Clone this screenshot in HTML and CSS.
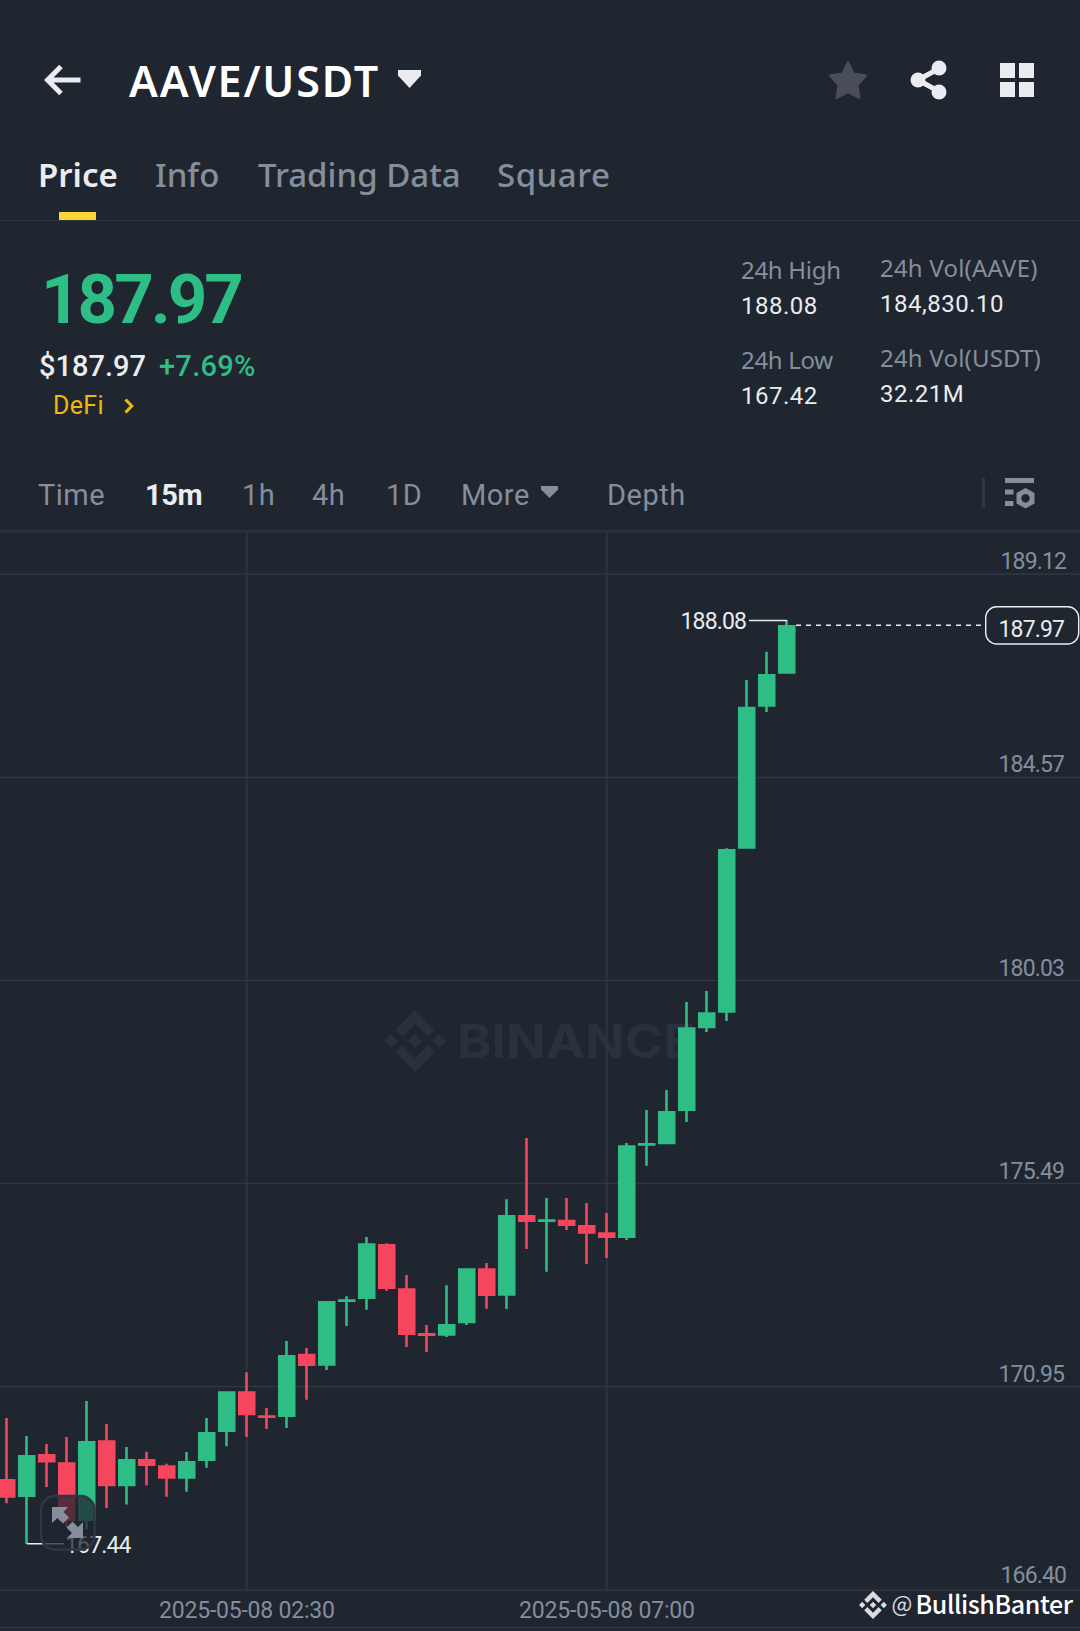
FILE: index.html
```html
<!DOCTYPE html>
<html lang="en">
<head>
  <meta charset="UTF-8">
  <meta name="viewport" content="width=device-width, initial-scale=1.0">
  <title>AAVE/USDT</title>
  <link rel="stylesheet" href="styles.css">
</head>
<body>
  <header class="topbar">
    <svg class="back" width="37" height="32" viewBox="0 0 37 32" fill="none" stroke="#EAECEF" stroke-width="5"><path d="M36.500 16H4M17 2.500L3.500 16L17 29.500"/></svg>
    <h1 class="pair">AAVE/USDT</h1>
    <svg class="pair-caret" width="23" height="18" viewBox="0 0 23 18" fill="#EAECEF"><path d="M0 0H23V5.500L11.500 18L0 5.500Z"/></svg>
    <div class="actions">
      <svg width="38" height="40" viewBox="0 0 38 40" fill="#4A4D5A" stroke="#4A4D5A" stroke-width="2" stroke-linejoin="round"><path d="M19 2L24.500 13.500L37 15.500L28.500 25L30.500 38L19 32L7.500 38L9.500 25L1 15.500L13.500 13.500Z"/></svg>
      <svg width="38" height="40" viewBox="0 0 38 40" fill="#EAECEF"><path d="M29 8.500L8 20L29 31.500" fill="none" stroke="#EAECEF" stroke-width="5"/><circle cx="29" cy="8" r="7.500"/><circle cx="8" cy="20" r="7.500"/><circle cx="29" cy="32" r="7.500"/></svg>
      <svg width="34" height="34" viewBox="0 0 34 34" fill="#EAECEF"><path d="M0 0H15V15H0ZM19 0H34V15H19ZM0 19H15V34H0ZM19 19H34V34H19Z"/></svg>
    </div>
  </header>

  <nav class="tabs">
    <a class="tab active">Price</a>
    <a class="tab">Info</a>
    <a class="tab">Trading Data</a>
    <a class="tab">Square</a>
  </nav>

  <section class="summary">
    <div class="quote">
      <div class="last">187.97</div>
      <div class="sub"><span class="fiat">$187.97</span><span class="change">+7.69%</span></div>
      <div class="tag">DeFi <svg width="10" height="16" viewBox="0 0 10 16" fill="none" stroke="#F0B90B" stroke-width="3"><path d="M1.500 1.500L7.800 8L1.500 14.500"/></svg></div>
    </div>
    <dl class="stats">
      <div><dt>24h High</dt><dd>188.08</dd></div>
      <div><dt>24h Low</dt><dd>167.42</dd></div>
    </dl>
    <dl class="stats volume">
      <div><dt>24h Vol(AAVE)</dt><dd>184,830.10</dd></div>
      <div><dt>24h Vol(USDT)</dt><dd>32.21M</dd></div>
    </dl>
  </section>

  <nav class="intervals">
    <span>Time</span>
    <span class="selected">15m</span>
    <span>1h</span>
    <span>4h</span>
    <span>1D</span>
    <span class="more">More <svg width="17" height="12" viewBox="0 0 17 12" fill="#848E9C"><path d="M0 0H17V3.500L8.500 12L0 3.500Z"/></svg></span>
    <span>Depth</span>
    <i class="divider"></i>
    <svg class="settings" width="30" height="31" viewBox="0 0 30 31" fill="#848E9C"><path d="M0 0H29V5H0ZM0 11.500H8.500V16.500H0ZM0 23H8.500V28H0Z"/><path fill-rule="evenodd" d="M20.500 10L29.500 15V25.500L20.500 30.500L11.500 25.500V15ZM20.500 16A4.200 4.200 0 1 0 20.500 24.400A4.200 4.200 0 1 0 20.500 16Z"/></svg>
  </nav>

  <main class="chart">
    <svg class="plot" width="1080" height="1101" viewBox="0 530 1080 1101">
      <defs>
        <g id="logo">
          <path d="M0 -31L19.500 -11.500L12.500 -4.500L0 -17L-12.500 -4.500L-19.500 -11.500Z"/>
          <path d="M0 31L19.500 11.500L12.500 4.500L0 17L-12.500 4.500L-19.500 11.500Z"/>
          <path d="M0 -7.300L7.300 0L0 7.300L-7.300 0Z"/>
          <path d="M-24 -7L-17 0L-24 7L-31 0Z"/>
          <path d="M24 -7L31 0L24 7L17 0Z"/>
        </g>
      </defs>
      <g class="watermark">
        <use href="#logo" x="415" y="1041"/>
        <text x="457" y="1058" textLength="238" lengthAdjust="spacingAndGlyphs">BINANCE</text>
      </g>
      <g class="grid">
        <path class="top" d="M0 531.500H1080"/>
        <path d="M0 574H1080M0 777.500H1080M0 980.500H1080M0 1183.500H1080M0 1386.500H1080M0 1590H1080M0 1627.500H1080"/>
        <path d="M246.700 533V1590M606.700 533V1590"/>
      </g>
      <g id="candles"></g>
      <g class="marks">
        <path d="M749 620.500H787M27 1543.700H64"/>
        <path d="M796 625.300H981" stroke-dasharray="5 5"/>
        <rect x="985.700" y="606.700" width="93" height="37.300" rx="11"/>
      </g>
      <g class="labels bright">
        <text x="680.500" y="629" textLength="66.500">188.08</text>
        <text x="998.500" y="637" textLength="66.500">187.97</text>
        <text x="65" y="1553" textLength="66.500">167.44</text>
      </g>
      <g class="labels">
        <text x="1000.500" y="569" textLength="66.500">189.12</text>
        <text x="998.500" y="772" textLength="66.500">184.57</text>
        <text x="998.500" y="976" textLength="66.500">180.03</text>
        <text x="998.500" y="1179" textLength="66.500">175.49</text>
        <text x="998.500" y="1382" textLength="66.500">170.95</text>
        <text x="1000.500" y="1583" textLength="66.500">166.40</text>
        <text x="159" y="1618" textLength="176">2025-05-08 02:30</text>
        <text x="519" y="1618" textLength="176">2025-05-08 07:00</text>
      </g>
      <g class="expand">
        <rect x="41" y="1496" width="53.500" height="53.500" rx="14"/>
        <path d="M52 1507H68L63.500 1512L69 1517.500L63 1523.500L57.500 1518L52 1523ZM83 1538H67L72 1533L66.500 1527.500L72.500 1521.500L78 1527L83 1522Z"/>
      </g>
      <g class="author">
        <use href="#logo" transform="translate(873 1605) scale(.45)"/>
        <text class="at" x="891.500" y="1612" textLength="21">@</text>
        <text x="915.500" y="1613.700" textLength="157.500">BullishBanter</text>
      </g>
    </svg>
  </main>

  <script src="chart.js"></script>
</body>
</html>
```

FILE: styles.css
```css
:root {
  --bg: #1F2630;
  --text: #EAECEF;
  --muted: #848E9C;
  --line: #303742;
  --green: #2EBD85;
  --red: #F6465D;
  --yellow: #FCD535;
}

* {
  box-sizing: border-box;
}

body {
  width: 1080px;
  height: 1631px;
  margin: 0;
  overflow: hidden;
  background: var(--bg);
  color: var(--text);
  font-family: Roboto, "Liberation Sans", sans-serif;
}

svg {
  display: block;
  flex: none;
}

.topbar {
  display: flex;
  align-items: center;
  height: 142px;
  padding: 18px 46px 0 44px;
}

.pair {
  width: 253px;
  margin: 1px 0 0 48px;
  color: #fff;
  font: 600 43px/60px "Noto Sans", sans-serif;
  letter-spacing: 1.8px;
  white-space: nowrap;
}

.pair-caret {
  margin-left: 16px;
  margin-top: -2px;
}

.actions {
  display: flex;
  align-items: center;
  gap: 43px;
  margin-left: auto;
}

.actions svg:last-child {
  margin-left: 9px;
}

.tabs {
  display: grid;
  grid-template-columns: 117px 103px 239px auto;
  height: 79px;
  padding-left: 38px;
  border-bottom: 1px solid var(--line);
}

.tab {
  justify-self: start;
  padding-top: 9px;
  color: var(--muted);
  font: 500 33px/48px "Noto Sans", sans-serif;
  white-space: nowrap;
}

.tab:last-child {
  letter-spacing: .5px;
}

.tab.active {
  color: var(--text);
  font-weight: 600;
}

.tab.active::after {
  content: "";
  display: block;
  width: 37px;
  height: 8px;
  margin: 13px auto 0;
  background: var(--yellow);
}

.summary {
  display: grid;
  grid-template-columns: 702px 139px auto;
  height: 240px;
  padding: 34px 0 0 39px;
}

.last {
  padding: 2px 0 0 2px;
  color: var(--green);
  font-size: 69px;
  font-weight: 700;
  line-height: 86px;
  letter-spacing: -3px;
}

.sub {
  display: flex;
  gap: 13px;
  margin-top: 3px;
  font-size: 29px;
  font-weight: 500;
  line-height: 40px;
}

.change {
  letter-spacing: .3px;
  color: var(--green);
}

.tag {
  display: flex;
  align-items: center;
  gap: 20px;
  padding: 1px 0 0 14px;
  color: #F0B90B;
  font-size: 25px;
  line-height: 38px;
  letter-spacing: .3px;
}

.stats {
  margin: -3px 0 0;
  font-size: 24px;
  line-height: 35px;
}

.stats.volume {
  margin-top: -5px;
}

.stats div {
  height: 90px;
}

.stats dt {
  color: var(--muted);
  font-family: "Noto Sans", sans-serif;
  letter-spacing: -.3px;
  white-space: nowrap;
}

.stats.volume dt {
  letter-spacing: .2px;
}

.stats dd {
  margin: 2px 0 0;
  letter-spacing: .5px;
}

.intervals {
  display: grid;
  grid-template-columns: 107px 97px 70px 74px 75px 146px 374px 23px auto;
  align-items: center;
  height: 69px;
  padding: 0 0 2px 38px;
  color: var(--muted);
  font-size: 29px;
  letter-spacing: .5px;
}

.intervals .selected {
  color: var(--text);
  font-weight: 700;
  letter-spacing: -.4px;
}

.more {
  display: flex;
  align-items: center;
  gap: 11px;
}

.more svg {
  margin-top: -5px;
}

.divider {
  width: 3px;
  height: 30px;
  margin: -3px 0 0 1px;
  background: #2F3842;
}

.settings {
  margin: -3px 0 0 1px;
}

.watermark {
  fill: #2B313C;
  font: 700 47px Inter, sans-serif;
}

.grid path {
  stroke: var(--line);
  stroke-width: 1.6;
}

.grid .top {
  stroke: #292F3A;
  stroke-width: 3;
}

.up {
  fill: var(--green);
}

.down {
  fill: var(--red);
}

.marks {
  fill: none;
  stroke: var(--text);
  stroke-width: 1.4;
}

.labels {
  fill: var(--muted);
  font-size: 23px;
}

.labels.bright {
  fill: var(--text);
}

.expand {
  fill: var(--muted);
}

.expand rect {
  fill: rgba(31, 38, 48, .75);
  stroke: #2F3842;
  stroke-width: 2.5;
}

.author {
  fill: #fff;
  font: 500 25px "Noto Sans CJK SC", sans-serif;
}

.author use,
.author .at {
  fill: #DADCE0;
}

.author .at {
  font-size: 22px;
  font-weight: 400;
}
```

FILE: chart.js
```js
// [direction, high, body top, body bottom, low] in plot coordinates
const candles = [
  ['down', 1418, 1479, 1497.7, 1503.3],
  ['up', 1436, 1455, 1497, 1544],
  ['down', 1444, 1454, 1462.5, 1487],
  ['down', 1437, 1462.3, 1521, 1526.7],
  ['up', 1401, 1441, 1521, 1529],
  ['down', 1424, 1440.3, 1486.3, 1508],
  ['up', 1447, 1459, 1486.3, 1504.5],
  ['down', 1451.7, 1459, 1466, 1485.5],
  ['down', 1463.7, 1465.3, 1478.7, 1496.7],
  ['up', 1452, 1461, 1478.7, 1491.7],
  ['up', 1418, 1432, 1461, 1467.7],
  ['up', 1391.3, 1391.3, 1432, 1446.3],
  ['down', 1372.3, 1391.3, 1415.3, 1437],
  ['down', 1408, 1415.3, 1418, 1429],
  ['up', 1341, 1355, 1417, 1428],
  ['down', 1348, 1353.7, 1366, 1399.7],
  ['up', 1301, 1301, 1365.7, 1370],
  ['up', 1296.3, 1299.3, 1302, 1326],
  ['up', 1237, 1243.3, 1299, 1309.7],
  ['down', 1243.3, 1244, 1289, 1290.7],
  ['down', 1275, 1288.3, 1335, 1347],
  ['down', 1325, 1333, 1336, 1352],
  ['up', 1285.3, 1324, 1335.7, 1337],
  ['up', 1268.3, 1268.3, 1323.3, 1325],
  ['down', 1263, 1268.3, 1296, 1308.7],
  ['up', 1199.3, 1215, 1295.7, 1309],
  ['down', 1138, 1215, 1222, 1249],
  ['up', 1198, 1219.3, 1222, 1271.7],
  ['down', 1198, 1219.7, 1226, 1230],
  ['down', 1203, 1225, 1233.7, 1264],
  ['down', 1213, 1232.3, 1238, 1258],
  ['up', 1143, 1145.3, 1238, 1240],
  ['up', 1110, 1143, 1145.7, 1165.7],
  ['up', 1090, 1111, 1144.3, 1144.3],
  ['up', 1002, 1027.3, 1111, 1122],
  ['up', 991, 1012.3, 1028.3, 1032],
  ['up', 848.3, 849, 1012.7, 1021],
  ['up', 680, 706.7, 848.7, 848.7],
  ['up', 651.7, 674, 706.7, 712],
  ['up', 620, 625, 673.7, 673.7]
];

const step = 20;
const layer = document.getElementById('candles');

candles.forEach(([dir, high, top, bottom, low], i) => {
  const x = 6.6 + i * step;
  const path = document.createElementNS('http://www.w3.org/2000/svg', 'path');
  path.setAttribute('class', dir);
  path.setAttribute('d',
    `M${x - 8.6} ${top}h17.5V${bottom}h-17.5Z` +
    `M${x - 1.4} ${high}h2.6V${low}h-2.6Z`);
  layer.appendChild(path);
});
```
